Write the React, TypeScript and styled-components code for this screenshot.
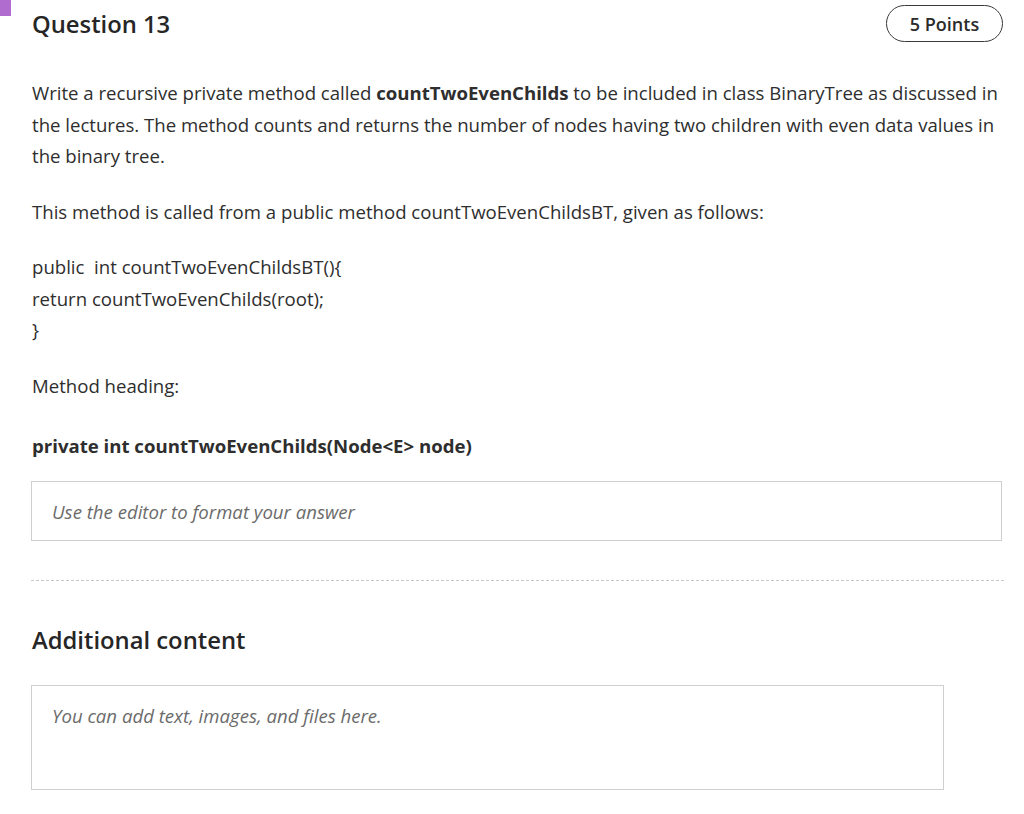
import React from "react";
import styled, { createGlobalStyle } from "styled-components";

const GlobalStyle = createGlobalStyle`
  html, body {
    margin: 0;
    padding: 0;
    background: #ffffff;
  }
  body {
    font-family: "Open Sans", "Liberation Sans", sans-serif;
    color: #2e2e2e;
  }
`;

const Page = styled.div`
  position: relative;
  width: 1024px;
  min-height: 814px;
  padding: 0 20px 0 32px;
  box-sizing: border-box;
`;

const Marker = styled.span`
  position: absolute;
  left: 0;
  top: 0;
  width: 11px;
  height: 16px;
  background: #b06ccf;
`;

const Header = styled.div`
  display: flex;
  align-items: center;
  justify-content: space-between;
  height: 48px;
`;

const Title = styled.h2`
  margin: -1px 0 0;
  font-size: 23.8px;
  font-weight: 600;
  color: #262626;
  line-height: 48px;
`;

const Badge = styled.span`
  display: inline-flex;
  align-items: center;
  justify-content: center;
  width: 115px;
  height: 35px;
  border: 1.5px solid #3a3a3a;
  border-radius: 20px;
  font-size: 18px;
  font-weight: 600;
  color: #2b2b2b;
  margin: -1px 1px 0 0;
`;

const Body = styled.div`
  padding-top: 29px;
  font-size: 18.6px;
  line-height: 31.5px;
`;

const Para = styled.p<{ $gap?: number }>`
  margin: 0 0 ${(p) => p.$gap ?? 24}px;
`;

const Strong = styled.strong`
  font-weight: 700;
`;

const EditorBox = styled.div<{ $tall?: boolean; $width?: string }>`
  box-sizing: border-box;
  width: ${(p) => p.$width ?? "calc(100% - 1px)"};
  height: ${(p) => (p.$tall ? "105px" : "60px")};
  border: 1px solid #cfcfcf;
  padding: 16px 20px;
  font-size: 18.6px;
  font-style: italic;
  color: #6b6b6b;
  line-height: 28px;
  margin-left: -1px;
`;

const Divider = styled.hr`
  border: 0;
  border-top: 1px dashed #c8c8c8;
  margin: 39px 0 0 -1px;
  height: 0;
`;

const SectionTitle = styled.h3`
  margin: 39px 0 25px;
  font-size: 23.8px;
  font-weight: 600;
  color: #262626;
  line-height: 40px;
`;

export default function App() {
  return (
    <>
      <GlobalStyle />
      <Page>
        <Marker />
        <Header>
          <Title>Question 13</Title>
          <Badge>5 Points</Badge>
        </Header>
        <Body>
          <Para>
            Write a recursive private method called <Strong>countTwoEvenChilds</Strong> to be
            included in class BinaryTree as discussed in the lectures. The method counts and
            returns the number of nodes having two children with even data values in the binary
            tree.
          </Para>
          <Para>
            This method is called from a public method countTwoEvenChildsBT, given as follows:
          </Para>
          <Para>
            public&nbsp; int countTwoEvenChildsBT(){"{"}
            <br />
            return countTwoEvenChilds(root);
            <br />
            {"}"}
          </Para>
          <Para $gap={29}>Method heading:</Para>
          <Para $gap={19}>
            <Strong>private int countTwoEvenChilds(Node&lt;E&gt; node)</Strong>
          </Para>
          <EditorBox>Use the editor to format your answer</EditorBox>
        </Body>
        <Divider />
        <SectionTitle>Additional content</SectionTitle>
        <EditorBox $tall $width="913px">
          You can add text, images, and files here.
        </EditorBox>
      </Page>
    </>
  );
}
